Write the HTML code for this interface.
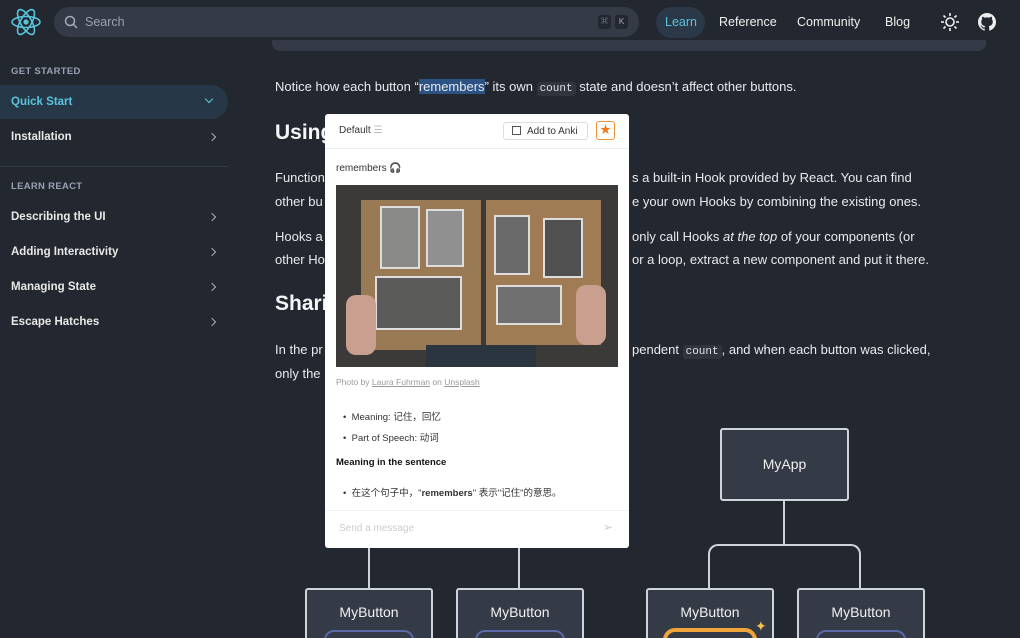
<!DOCTYPE html>
<html style="width:1020px;height:638px;overflow:hidden"><head><meta charset="utf-8"><style>
*{margin:0;padding:0;box-sizing:border-box}
body{width:1020px;height:638px;overflow:hidden;background:#23272f;font-family:"Liberation Sans","Noto Sans CJK SC",sans-serif;color:#e4e6eb;position:relative}
.a{position:absolute;white-space:nowrap}
.nav{font-size:12.5px;color:#f0f0f0}
.side{font-size:11.5px;font-weight:bold;color:#e8e8e8}
.cap{font-size:9.5px;font-weight:bold;color:#99a1b3;letter-spacing:.3px}
.chev{position:absolute;right:16px;width:6px;height:6px;border-right:1.6px solid #aab;border-top:1.6px solid #aab;transform:rotate(45deg)}
.p{font-size:13px;color:#e8eaee}
.h{font-size:21px;font-weight:bold;color:#f5f6f7}
code{font-family:"Liberation Mono",monospace;font-size:11px;background:#2f343d;padding:1px 3px;border-radius:3px;color:#dfe2e7}
.box{position:absolute;background:#343a46;border:2px solid #cfd3da;border-radius:3px;color:#f0f0f0;font-size:14px;text-align:center;overflow:hidden}
.ln{position:absolute;border-color:#cfd3da;border-style:solid;border-width:0}
.pop{position:absolute;left:325px;top:114px;width:304px;height:434px;background:#fff;border-radius:3px;color:#222}
</style></head><body>
<svg class="a" style="left:10px;top:7px" width="32" height="30" viewBox="-16 -15 32 30"><g fill="none" stroke="#58c4dc" stroke-width="1.6"><ellipse rx="14" ry="5.5"/><ellipse rx="14" ry="5.5" transform="rotate(60)"/><ellipse rx="14" ry="5.5" transform="rotate(120)"/></g><circle r="2.6" fill="#58c4dc"/></svg>
<div class="a" style="left:54px;top:7px;width:585px;height:30px;border-radius:15px;background:#343a46"></div>
<svg class="a" style="left:64px;top:15px" width="14" height="14"><circle cx="6" cy="6" r="4.5" fill="none" stroke="#aab" stroke-width="1.5"/><line x1="9.5" y1="9.5" x2="13" y2="13" stroke="#aab" stroke-width="1.5"/></svg>
<div class="a nav" style="left:85px;top:15px;color:#99a1b3">Search</div>
<div class="a" style="left:598px;top:15px;width:13px;height:14px;background:#23272f;border-radius:3px;font-size:7px;color:#aab;text-align:center;line-height:14px">⌘</div>
<div class="a" style="left:615px;top:15px;width:13px;height:14px;background:#23272f;border-radius:3px;font-size:8px;color:#aab;text-align:center;line-height:14px">K</div>
<div class="a" style="left:656px;top:7px;width:49px;height:31px;border-radius:16px;background:#2b3848"></div>
<div class="a nav" style="left:665px;top:15px;color:#58c4dc">Learn</div>
<div class="a nav" style="left:719px;top:15px">Reference</div>
<div class="a nav" style="left:797px;top:15px">Community</div>
<div class="a nav" style="left:885px;top:15px">Blog</div>
<svg class="a" style="left:940px;top:12px" width="20" height="20" viewBox="0 0 20 20"><circle cx="10" cy="10" r="4" fill="none" stroke="#eee" stroke-width="1.6"/><g stroke="#eee" stroke-width="1.6"><line x1="10" y1="1" x2="10" y2="4"/><line x1="10" y1="16" x2="10" y2="19"/><line x1="1" y1="10" x2="4" y2="10"/><line x1="16" y1="10" x2="19" y2="10"/><line x1="3.5" y1="3.5" x2="5.5" y2="5.5"/><line x1="14.5" y1="14.5" x2="16.5" y2="16.5"/><line x1="3.5" y1="16.5" x2="5.5" y2="14.5"/><line x1="14.5" y1="5.5" x2="16.5" y2="3.5"/></g></svg>
<svg class="a" style="left:978px;top:13px" width="18" height="18" viewBox="0 0 16 16"><path fill="#eee" d="M8 0C3.58 0 0 3.580 0 8c0 3.54 2.29 6.53 5.47 7.59.4.07.55-.17.55-.38v-1.33c-2.23.48-2.7-1.07-2.7-1.07-.36-.92-.89-1.170-.89-1.17-.73-.5.06-.49.06-.49.8.06 1.23.83 1.23.83.71 1.22 1.87.87 2.33.66.07-.52.28-.87.51-1.07-1.78-.2-3.65-.89-3.65-3.950 0-.87.31-1.59.82-2.15-.08-.2-.36-1.02.08-2.12 0 0 .67-.21 2.2.82a7.6 7.6 0 0 1 4 0c1.53-1.04 2.2-.82 2.2-.82.44 1.1.16 1.92.08 2.12.51.56.82 1.270.82 2.15 0 3.07-1.87 3.75-3.65 3.95.29.25.54.73.54 1.48v2.2c0 .21.15.46.55.38A8 8 0 0 0 16 8c0-4.42-3.58-8-8-8z"/></svg>
<div class="a" style="left:272px;top:40px;width:714px;height:11px;background:#343a46;border-radius:0 0 8px 8px"></div>
<div class="a cap" style="left:11px;top:66px">GET STARTED</div>
<div class="a" style="left:0;top:85px;width:228px;height:34px;background:#263848;border-radius:0 17px 17px 0"></div>
<div class="a side" style="left:11px;top:96px;color:#58c4dc">Quick Start</div>
<div class="a" style="left:206px;top:96px;width:6px;height:6px;border-right:1.6px solid #58c4dc;border-bottom:1.6px solid #58c4dc;transform:rotate(45deg)"></div>
<div class="a side" style="left:11px;top:131px;width:220px">Installation<span class="chev" style="top:3px"></span></div>
<div class="a" style="left:0;top:166px;width:228px;height:1px;background:#343a46"></div>
<div class="a cap" style="left:11px;top:181px">LEARN REACT</div>
<div class="a side" style="left:11px;top:211px;width:220px">Describing the UI<span class="chev" style="top:3px"></span></div>
<div class="a side" style="left:11px;top:246px;width:220px">Adding Interactivity<span class="chev" style="top:3px"></span></div>
<div class="a side" style="left:11px;top:281px;width:220px">Managing State<span class="chev" style="top:3px"></span></div>
<div class="a side" style="left:11px;top:316px;width:220px">Escape Hatches<span class="chev" style="top:3px"></span></div>
<div class="a p" style="left:275px;top:79px">Notice how each button “<span style="background:#2c5384">remembers</span>” its own <code>count</code> state and doesn’t affect other buttons.</div>
<div class="a h" style="left:275px;top:121px">Using</div>
<div class="a p" style="left:275px;top:170px">Function</div><div class="a p" style="left:632px;top:170px">s a built-in Hook provided by React. You can find</div>
<div class="a p" style="left:275px;top:194px">other bu</div><div class="a p" style="left:632px;top:194px">e your own Hooks by combining the existing ones.</div>
<div class="a p" style="left:275px;top:229px">Hooks a</div><div class="a p" style="left:632px;top:229px">only call Hooks <i>at the top</i> of your components (or</div>
<div class="a p" style="left:275px;top:252px">other Ho</div><div class="a p" style="left:632px;top:252px">or a loop, extract a new component and put it there.</div>
<div class="a h" style="left:275px;top:292px">Shari</div>
<div class="a p" style="left:275px;top:342px">In the pr</div><div class="a p" style="left:632px;top:342px">pendent <code>count</code>, and when each button was clicked,</div>
<div class="a p" style="left:275px;top:366px">only the</div>
<div class="box" style="left:720px;top:428px;width:129px;height:73px;line-height:69px">MyApp</div>
<div class="ln" style="left:783px;top:501px;height:44px;border-left-width:2px"></div>
<div class="ln" style="left:708px;top:544px;width:153px;height:46px;border-width:2px 2px 0 2px;border-radius:10px 10px 0 0"></div>
<div class="ln" style="left:368px;top:548px;width:152px;height:42px;border-width:0 2px 0 2px"></div>
<div class="box" style="left:305px;top:588px;width:128px;height:60px;padding-top:14px">MyButton<div style="margin:10px auto 0;width:90px;height:20px;border:2px solid #5a6aa8;border-radius:10px"></div></div>
<div class="box" style="left:456px;top:588px;width:128px;height:60px;padding-top:14px">MyButton<div style="margin:10px auto 0;width:90px;height:20px;border:2px solid #5a6aa8;border-radius:10px"></div></div>
<div class="box" style="left:646px;top:588px;width:128px;height:60px;padding-top:14px">MyButton<div style="margin:8px auto 0;width:94px;height:24px;border:4px solid #f0a43a;border-radius:12px"></div></div>
<div class="a" style="left:755px;top:618px;color:#f5c04a;font-size:14px">✦</div>
<div class="box" style="left:797px;top:588px;width:128px;height:60px;padding-top:14px">MyButton<div style="margin:10px auto 0;width:90px;height:20px;border:2px solid #5a6aa8;border-radius:10px"></div></div>
<div class="pop">
 <div class="a" style="left:14px;top:11px;font-size:10px;color:#333">Default <span style="color:#bbb">☰</span></div>
 <div class="a" style="left:178px;top:8px;width:85px;height:18px;border:1px solid #ddd;border-radius:3px;font-size:10px;color:#333;padding:3px 0 0 8px"><span style="display:inline-block;width:9px;height:9px;border:1px solid #555;vertical-align:-1px;margin-right:6px"></span>Add to Anki</div>
 <div class="a" style="left:271px;top:7px;width:19px;height:19px;border:1px solid #f0913a;border-radius:3px;color:#f07a1a;font-size:11px;text-align:center;line-height:17px">★</div>
 <div class="a" style="left:0;top:34px;width:304px;height:1px;background:#eee"></div>
 <div class="a" style="left:11px;top:49px;font-size:10px;color:#333">remembers 🎧</div>
 <div class="a" style="left:11px;top:71px;width:282px;height:182px;background:#3c3a38;overflow:hidden">
  <div class="a" style="left:25px;top:15px;width:120px;height:150px;background:#9a7a55"></div>
  <div class="a" style="left:150px;top:15px;width:115px;height:145px;background:#a07c55"></div>
  <div class="a" style="left:44px;top:21px;width:40px;height:63px;background:#8a8a88;border:2px solid #ddd"></div>
  <div class="a" style="left:90px;top:24px;width:38px;height:58px;background:#909090;border:2px solid #ddd"></div>
  <div class="a" style="left:39px;top:91px;width:87px;height:54px;background:#5a5a58;border:2px solid #ddd"></div>
  <div class="a" style="left:158px;top:30px;width:36px;height:60px;background:#6a6a6a;border:2px solid #ddd"></div>
  <div class="a" style="left:207px;top:33px;width:40px;height:60px;background:#505050;border:2px solid #ddd"></div>
  <div class="a" style="left:160px;top:100px;width:66px;height:40px;background:#707070;border:2px solid #ddd"></div>
  <div class="a" style="left:10px;top:110px;width:30px;height:60px;background:#c9a090;border-radius:10px"></div>
  <div class="a" style="left:240px;top:100px;width:30px;height:60px;background:#c9a090;border-radius:10px"></div>
  <div class="a" style="left:90px;top:160px;width:110px;height:22px;background:#2a3540"></div>
 </div>
 <div class="a" style="left:11px;top:263px;font-size:8.5px;color:#999">Photo by <u>Laura Fuhrman</u> on <u>Unsplash</u></div>
 <div class="a" style="left:18px;top:295px;font-size:9.5px;color:#333">•&nbsp; Meaning: 记住，回忆</div>
 <div class="a" style="left:18px;top:316px;font-size:9.5px;color:#333">•&nbsp; Part of Speech: 动词</div>
 <div class="a" style="left:11px;top:343px;font-size:9.5px;font-weight:bold;color:#111">Meaning in the sentence</div>
 <div class="a" style="left:18px;top:371px;font-size:9.5px;color:#333">•&nbsp; 在这个句子中，"<b>remembers</b>" 表示"记住"的意思。</div>
 <div class="a" style="left:0;top:396px;width:304px;height:1px;background:#f2f2f2"></div>
 <div class="a" style="left:14px;top:409px;font-size:10px;color:#ccc">Send a message</div>
 <div class="a" style="left:278px;top:406px;font-size:12px;color:#ccc">➢</div>
</div>
</body></html>
